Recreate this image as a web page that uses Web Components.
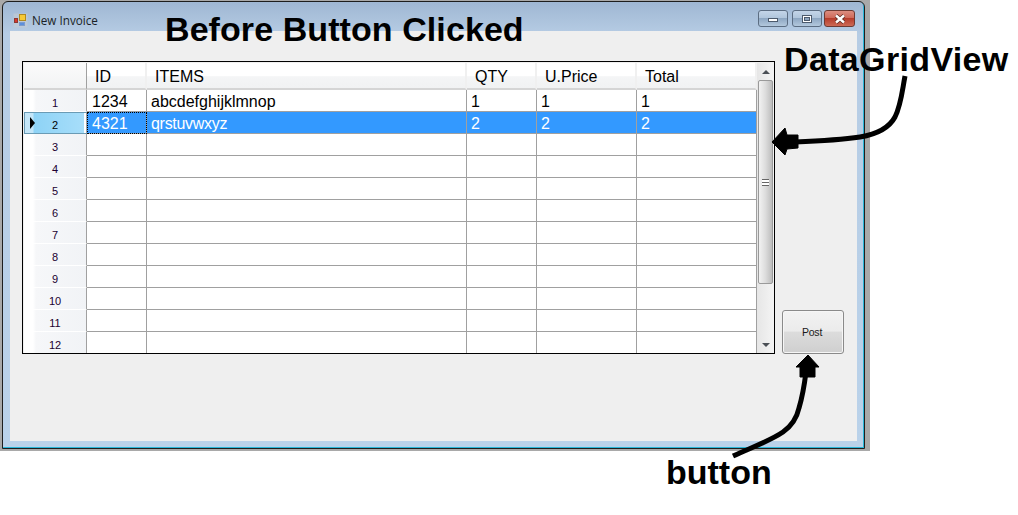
<!DOCTYPE html>
<html>
<head>
<meta charset="utf-8">
<title>New Invoice</title>
<style>
html, body { margin: 0; padding: 0; background: #fff; }
body { width: 1018px; height: 515px; overflow: hidden; position: relative; font-family: "Liberation Sans", Arial, sans-serif; }
</style>
</head>
<body>
<form-window caption="New Invoice">
    <grid-view></grid-view>
    <post-button>Post</post-button>
</form-window>
<note-layer></note-layer>

<script>
class formWindow extends HTMLElement {
    constructor() {
        super();
        this.attachShadow({ mode: 'open' });
        this.shadowRoot.innerHTML = `
            <div class="frame">
                <div class="bar">
                    <svg class="app" width="15" height="15" viewBox="0 0 15 15">
                        <rect x="0.5" y="0.5" width="14" height="14" fill="#c9ccd2" fill-opacity="0.55"/>
                        <rect x="6.5" y="1.5" width="6" height="6" fill="#f6c935" stroke="#b08a20"/>
                        <rect x="1.5" y="5.5" width="3" height="4" fill="#d9372c" stroke="#8a3a34"/>
                        <rect x="6.5" y="9.5" width="5" height="3" fill="#5d8fdc" stroke="#7d9ccc"/>
                    </svg>
                    <span class="cap"></span>
                    <div class="btns">
                        <span class="b"><svg width="12" height="8" viewBox="0 0 12 8"><rect x="1.5" y="3.5" width="9" height="3" fill="#fff" stroke="#4c5a6c"/></svg></span>
                        <span class="b max"><svg width="12" height="10" viewBox="0 0 12 10"><rect x="1.5" y="1.5" width="9" height="7" fill="#fff" stroke="#4c5a6c"/><rect x="3.5" y="3.5" width="5" height="3" fill="#8fa6c0" stroke="#4c5a6c"/></svg></span>
                        <span class="b x"><svg width="14" height="10" viewBox="0 0 14 10"><path d="M3 1.5 L11 8.5 M11 1.5 L3 8.5" stroke="#5a2a22" stroke-width="4"/><path d="M3 1.5 L11 8.5 M11 1.5 L3 8.5" stroke="#fff" stroke-width="2.4"/></svg></span>
                    </div>
                </div>
                <div class="client"><slot></slot></div>
            </div>
            <style>
                :host { display: block; width: 870px; height: 451px; box-sizing: border-box; padding: 1px 5px 2px 2px; background: #a9a9a9; }
                .frame { box-sizing: border-box; height: 448px; display: flex; flex-direction: column; padding: 0 7px 7px; border: 1px solid #1e1e1e; border-radius: 6px 6px 0 0; background: linear-gradient(#9fb7d3 0, #b6cce4 32px, #bad2ea 100%); box-shadow: inset -1px -1px 0 #29b6d8; }
                .bar { height: 29px; flex: none; display: flex; align-items: center; box-sizing: border-box; padding: 7px 0 0 3px; }
                .app { margin-right: 4px; }
                .cap { font: 11.7px "Open Sans", "Noto Sans", sans-serif; color: #1a1f26; }
                .btns { margin-left: auto; display: flex; gap: 4px; margin-top: -3px; margin-right: 2px; }
                .b { box-sizing: border-box; width: 30px; height: 17px; display: flex; align-items: center; justify-content: center; border: 1px solid #5c6d82; border-radius: 3px; background: linear-gradient(#c4d5e8 0, #b1c6dc 45%, #8ea7c2 50%, #b3c8dd 100%); }
                .b.max { margin-right: -2px; }
                .b.x { width: 31px; border-color: #6d3a33; background: linear-gradient(#dc8d80 0, #cf6a5b 45%, #b63d2c 50%, #cd6a56 100%); }
                .client { flex: 1; background: #efefef; display: flex; align-items: flex-start; padding: 30px 0 0 12px; }
            </style>
        `;
        this.shadowRoot.querySelector('.cap').textContent = this.getAttribute('caption');
    }
}
customElements.define('form-window', formWindow);


class gridView extends HTMLElement {
    constructor() {
        super();
        this.attachShadow({ mode: 'open' });

        const cols = ['ID', 'ITEMS', 'QTY', 'U.Price', 'Total'];
        const data = { 1: ['1234', 'abcdefghijklmnop', '1', '1', '1'], 2: ['4321', 'qrstuvwxyz', '2', '2', '2'] };

        let html = '<div class="corner"></div>';
        html += cols.map(c => `<div class="head">${c}</div>`).join('');
        for (let r = 1; r <= 12; r++) {
            const vals = data[r] || ['', '', '', '', ''];
            const sel = r === 2 ? ' sel' : '';
            const arrow = r === 2 ? '<i></i>' : '';
            html += `<div class="num${sel}">${arrow}${r}</div>`;
            html += vals.map((v, i) => `<div class="cell${sel}${i === 0 ? ' first' : ''}">${v}</div>`).join('');
        }

        this.shadowRoot.innerHTML = `
            <div class="rows">${html}</div>
            <grid-scroll></grid-scroll>
            <style>
                :host { display: flex; box-sizing: border-box; width: 753px; height: 293px; border: 1px solid #000; padding: 1px 0 0 1px; background: #f0f0f0; overflow: hidden; }
                .rows { width: 733px; flex: none; display: grid; grid-template-columns: 63px 60px 320px 70px 100px 120px; grid-template-rows: 27px repeat(12, 22px); align-content: start; background: #fff; overflow: hidden; font: 16px/22px "Liberation Sans", Arial, sans-serif; color: #000; }
                .corner, .head { background: linear-gradient(#fff 0, #fff 50%, #f4f5f6 55%, #f1f2f3 100%); border-bottom: 2px solid #d5d5d5; box-sizing: border-box; }
                .corner { border-right: 1px solid #a0a0a0; background: linear-gradient(#fbfbfb, #f2f3f4); }
                .head { border-right: 2px solid #f0f0f0; padding-left: 8px; line-height: 27px; }
                .num { box-sizing: border-box; position: relative; border-bottom: 1px solid #fff; border-right: 1px solid #a0a0a0; background: linear-gradient(90deg, #fff 0, #fff 9px, #f6f7f9 12px, #f1f3f6 100%); font-size: 11px; line-height: 26px; text-align: center; color: #200030; }
                .num.sel { background: linear-gradient(90deg, #c4e6f8 0, #c4e6f8 9px, #8ed3f6 10px, #a8defa 100%); color: #000; border-top: 1px solid #6a9bb5; border-bottom: 1px solid #6a9bb5; line-height: 24px; box-shadow: inset 1px 0 0 #6a9bb5, inset -2px 0 0 #fff; }
                .num i { position: absolute; left: 6px; top: 4px; width: 0; height: 0; border-left: 5px solid #000; border-top: 6px solid transparent; border-bottom: 6px solid transparent; }
                .cell { box-sizing: border-box; border-right: 1px solid #a0a0a0; border-bottom: 1px solid #a0a0a0; padding-left: 4px; white-space: nowrap; overflow: hidden; line-height: 24px; }
                .cell.first { padding-left: 5px; }
                .cell.sel { background: #3399ff; color: #fff; letter-spacing: -0.3px; }
                .cell.sel.first { outline: 1px dotted #000; outline-offset: -1px; letter-spacing: 0; }
            </style>
        `;
    }
}
customElements.define('grid-view', gridView);


class gridScroll extends HTMLElement {
    constructor() {
        super();
        this.attachShadow({ mode: 'open' });
        this.shadowRoot.innerHTML = `
            <div class="up"></div>
            <div class="thumb"><span></span></div>
            <div class="down"></div>
            <style>
                :host { display: flex; flex-direction: column; flex: 1; align-items: center; background: linear-gradient(90deg, #e6e6e6, #f4f4f4); }
                .up, .down { flex: none; width: 100%; display: flex; align-items: center; justify-content: center; }
                .up { height: 17px; }
                .down { height: 16px; margin-top: auto; }
                .up::after { content: ""; border: 4px solid transparent; border-top: 0; border-bottom: 4px solid #4a4f55; }
                .down::after { content: ""; border: 4px solid transparent; border-bottom: 0; border-top: 4px solid #4a4f55; }
                .thumb { box-sizing: border-box; width: 15px; height: 204px; flex: none; border: 1px solid #9a9a9a; border-radius: 2px; background: linear-gradient(90deg, #f2f2f2, #dcdcdc 50%, #bdbdbd); display: flex; align-items: center; justify-content: center; }
                .thumb span { width: 7px; height: 5px; border-top: 1px solid #666; border-bottom: 1px solid #666; background: linear-gradient(#fff 0, #fff 40%, #666 40%, #666 60%, #fff 60%); }
            </style>
        `;
    }
}
customElements.define('grid-scroll', gridScroll);


class postButton extends HTMLElement {
    constructor() {
        super();
        this.attachShadow({ mode: 'open' });
        this.shadowRoot.innerHTML = `
            <slot></slot>
            <style>
                :host { display: flex; align-items: center; justify-content: center; box-sizing: border-box; width: 62px; height: 44px; margin: 249px 0 0 7px; border: 1px solid #8a8a8a; border-radius: 3px; background: linear-gradient(#f2f2f2 0, #ebebeb 48%, #dcdcdc 50%, #cfcfcf 100%); box-shadow: inset 0 0 0 1px #f6f6f6; font: 10.5px "Liberation Sans", Arial, sans-serif; letter-spacing: -0.2px; color: #1a1a1a; padding: 0 2px 1px 0; }
            </style>
        `;
    }
}
customElements.define('post-button', postButton);


// the labels and arrows drawn on top of the screenshot
class noteLayer extends HTMLElement {
    constructor() {
        super();
        this.attachShadow({ mode: 'open' });
        this.shadowRoot.innerHTML = `
            <span class="t one">Before Button Clicked</span>
            <span class="t two">DataGridView</span>
            <span class="t three">button</span>
            <svg width="1018" height="515" viewBox="0 0 1018 515">
                <path d="M905 76 C902 92 901 105 895 117 C888 130 872 135 860 137 C840 140 820 141 795 142" fill="none" stroke="#000" stroke-width="5"/>
                <path d="M772 142 L785 128 L787 135 L798 135 L798 148 L787 149 L785 155 Z" fill="#000" stroke="#000" stroke-linejoin="round"/>
                <path d="M733 456 C750 448 770 441 783 432 C793 425 797 417 799 408 C802 398 804 388 806 372" fill="none" stroke="#000" stroke-width="5"/>
                <path d="M808 355 L796 367 L800 367 L800 377 L815 377 L815 367 L819 367 Z" fill="#000" stroke="#000" stroke-linejoin="round"/>
            </svg>
            <style>
                :host { position: absolute; left: 0; top: 0; width: 1018px; height: 515px; pointer-events: none; }
                svg { position: absolute; left: 0; top: 0; }
                .t { position: absolute; font: bold 34px/38px "Liberation Sans", Arial, sans-serif; color: #000; white-space: nowrap; }
                .one { left: 165px; top: 10px; letter-spacing: 0.08px; }
                .two { left: 784px; top: 40px; letter-spacing: 0.35px; }
                .three { left: 666px; top: 453px; }
            </style>
        `;
    }
}
customElements.define('note-layer', noteLayer);
</script>
</body>
</html>
